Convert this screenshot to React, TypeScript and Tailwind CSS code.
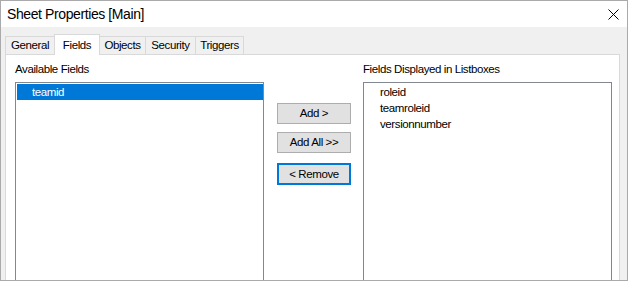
type Tab = { label: string; width: string; active?: boolean };

const tabs: Tab[] = [
  { label: "General", width: "w-[50px]" },
  { label: "Fields", width: "w-[46px]", active: true },
  { label: "Objects", width: "w-[47px]" },
  { label: "Security", width: "w-[51px]" },
  { label: "Triggers", width: "w-[49px]" },
];

const shownFields = ["roleid", "teamroleid", "versionnumber"];

function CloseIcon() {
  return (
    <svg width="11" height="11" viewBox="0 0 11 11" className="block">
      <path d="M0.5 0.5 L10.5 10.5 M10.5 0.5 L0.5 10.5" stroke="#000" strokeWidth="1" fill="none" />
    </svg>
  );
}

function ListBox({ items, selected }: { items: string[]; selected?: string }) {
  return (
    <div className="h-[220px] border border-[#828790] bg-white pl-px pt-px">
      {items.map((item) => (
        <div
          key={item}
          className={
            item === selected
              ? "flex h-[16px] items-center bg-[#0078d7] pl-[15px] text-white"
              : "flex h-[16px] items-center pl-[15px] text-black"
          }
        >
          {item}
        </div>
      ))}
    </div>
  );
}

function Button({ label, focused }: { label: string; focused?: boolean }) {
  return (
    <div
      className={
        focused
          ? "flex h-[22px] w-[74px] items-center justify-center border-2 border-[#0078d7] bg-[#e1e1e1] text-black"
          : "flex h-[21px] w-[74px] items-center justify-center border border-[#adadad] bg-[#e1e1e1] text-black"
      }
    >
      {label}
    </div>
  );
}

export default function App() {
  return (
    <div
      className="flex h-[281px] w-[628px] flex-col overflow-hidden border border-[#aaaaaa] bg-[#f0f0f0] text-[11.5px] leading-[15px] tracking-[-0.4px] text-black"
      style={{ fontFamily: '"Liberation Sans", Arial, sans-serif' }}
    >
      {/* title bar */}
      <div className="flex h-[26px] shrink-0 items-center justify-between bg-white pl-[6px] pr-[8px]">
        <span className="text-[14px] leading-[18px]">Sheet Properties [Main]</span>
        <CloseIcon />
      </div>

      <div className="flex flex-1 flex-col pl-[4px] pr-[7px] pt-[7px]">
        {/* tabs */}
        <div className="relative z-10 flex h-[20px] items-end">
          {tabs.map((tab, i) =>
            tab.active ? (
              <div
                key={tab.label}
                className={`${tab.width} -mb-px flex h-[21px] items-center justify-center border border-b-0 border-[#d9d9d9] bg-white ${i > 0 ? "-ml-px" : ""}`}
              >
                {tab.label}
              </div>
            ) : (
              <div
                key={tab.label}
                className={`${tab.width} flex h-[18px] items-center justify-center border border-b-0 border-[#d9d9d9] bg-[#f0f0f0] ${i > 0 ? "-ml-px" : ""}`}
              >
                {tab.label}
              </div>
            )
          )}
        </div>

        {/* panel */}
        <div className="flex flex-1 border border-b-0 border-[#d9d9d9] bg-white pl-[9px] pr-[7px] pt-[7px]">
          <div className="w-[249px]">
            <div className="mb-[5px]">Available Fields</div>
            <ListBox items={["teamid"]} selected="teamid" />
          </div>

          <div className="ml-[13px] flex flex-col pt-[41px]">
            <Button label="Add >" />
            <div className="mt-[8px]">
              <Button label="Add All >>" />
            </div>
            <div className="mt-[10px]">
              <Button label="< Remove" focused />
            </div>
          </div>

          <div className="ml-[12px] w-[249px]">
            <div className="mb-[5px]">Fields Displayed in Listboxes</div>
            <ListBox items={shownFields} />
          </div>
        </div>
      </div>
    </div>
  );
}
